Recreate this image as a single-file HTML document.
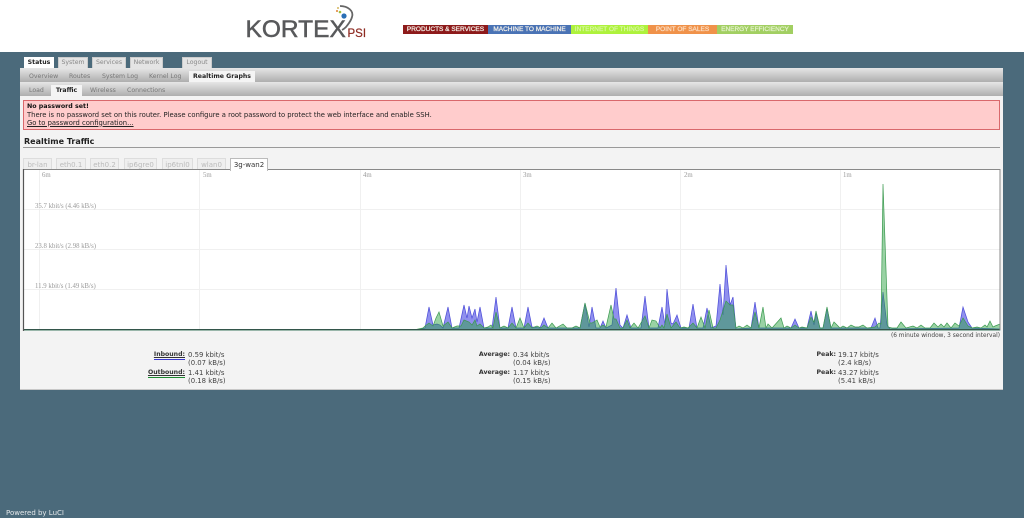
<!DOCTYPE html>
<html><head><meta charset="utf-8"><style>
*{box-sizing:border-box}
html,body{margin:0;padding:0;background:#4b6a7b}
body{width:1024px;height:518px;position:relative;overflow:hidden;font-family:"DejaVu Sans",sans-serif;font-size:6.8px;color:#333}
#w{position:absolute;left:0;top:0;width:1024px;height:518px;background:#4b6a7b;filter:blur(.3px)}
.a{position:absolute;white-space:nowrap}
.tab{position:absolute;top:57px;height:11px;background:#e4e4e4;border:1px solid #ccc;border-bottom:0;text-align:center;line-height:10px;color:#888;font-size:6.2px;white-space:nowrap}
.tab.on{background:#fff;color:#222;font-weight:bold;border-color:#fff}
.bar{position:absolute;left:20px;width:983px;background:linear-gradient(#e6e6e6,#aeaeae)}
.t2{position:absolute;color:#777;font-size:6.2px;white-space:nowrap;line-height:9px}
.sub{position:absolute;height:11px;background:#f4f4f4;color:#222;font-weight:bold;font-size:6.2px;line-height:11px;text-align:center;white-space:nowrap}
.ct{position:absolute;top:158px;height:12px;background:#efefef;border:1px solid #ddd;border-bottom:0;color:#bbb;font-size:7px;line-height:12px;text-align:center;white-space:nowrap}
.r{position:absolute;text-align:right;white-space:nowrap;font-weight:bold;color:#333;font-size:6.2px}
.v{position:absolute;white-space:nowrap;color:#444;font-size:6.9px;line-height:8px}
.seg{position:absolute;top:25px;height:9px;color:#f4f0e8;font:6.5px/9.5px "Liberation Sans",sans-serif;text-align:center;white-space:nowrap;overflow:hidden;-webkit-text-stroke:.25px currentColor}
</style></head><body><div id="w">
<div class="a" style="left:0;top:0;width:1024px;height:52px;background:#fff"></div>
<div class="a" style="left:245.5px;top:15.5px;font:24.5px/28px 'Liberation Sans',sans-serif;color:#58595b;-webkit-text-stroke:.5px #58595b">KORTEX</div>
<div class="a" style="left:347.5px;top:28px;font:11.5px/13px 'Liberation Sans',sans-serif;color:#8e2b22;-webkit-text-stroke:.2px #8e2b22">PSI</div>
<svg class="a" style="left:330px;top:0" width="30" height="34" viewBox="0 0 30 34">
<path d="M10 6C18 6 24 11 22 17C21 21 19 23 16 27C15 28 14 29 12 30" fill="none" stroke="#666" stroke-width="1.8"/>
<circle cx="14" cy="16" r="2.6" fill="#2a6fb5"/><circle cx="10" cy="12" r="1.3" fill="#a0c040"/><circle cx="7" cy="11" r="1" fill="#e08030"/><circle cx="8" cy="8" r=".9" fill="#c8a030"/>
</svg>
<div class="seg" style="left:403px;width:85px;background:#8d1a1a">PRODUCTS &amp; SERVICES</div>
<div class="seg" style="left:488px;width:83px;background:#4a73b5">MACHINE TO MACHINE</div>
<div class="seg" style="left:571px;width:77px;background:#aef23c;color:#d8f8a0">INTERNET OF THINGS</div>
<div class="seg" style="left:648px;width:69px;background:#f0924a;color:#fbdcc0">POINT OF SALES</div>
<div class="seg" style="left:717px;width:76px;background:#a2cf62;color:#e4f2cc">ENERGY EFFICIENCY</div>

<div class="tab on" style="left:24px;width:30px">Status</div>
<div class="tab" style="left:58px;width:30px">System</div>
<div class="tab" style="left:92px;width:34px">Services</div>
<div class="tab" style="left:130px;width:33px">Network</div>
<div class="tab" style="left:182px;width:30px">Logout</div>

<div class="a" style="left:20px;top:68px;width:983px;height:322px;background:#f3f3f3"></div>
<div class="bar" style="top:68px;height:14px"></div>
<div class="bar" style="top:82px;height:14px"></div>
<div class="t2" style="left:29px;top:72px">Overview</div>
<div class="t2" style="left:69px;top:72px">Routes</div>
<div class="t2" style="left:102px;top:72px">System Log</div>
<div class="t2" style="left:149px;top:72px">Kernel Log</div>
<div class="sub" style="left:189px;top:71px;width:66px">Realtime Graphs</div>
<div class="t2" style="left:29px;top:86px">Load</div>
<div class="sub" style="left:51px;top:85px;width:31px">Traffic</div>
<div class="t2" style="left:90px;top:86px">Wireless</div>
<div class="t2" style="left:127px;top:86px">Connections</div>

<div class="a" style="left:23px;top:100px;width:977px;height:30px;background:#ffcccc;border:1px solid #d9686c"></div>
<div class="a" style="left:27px;top:102px;font-weight:bold;font-size:6.3px;color:#111;line-height:9px">No password set!</div>
<div class="a" style="left:27px;top:110.5px;color:#222;line-height:9px">There is no password set on this router. Please configure a root password to protect the web interface and enable SSH.</div>
<div class="a" style="left:27px;top:118.5px;color:#222;line-height:9px;text-decoration:underline">Go to password configuration...</div>

<div class="a" style="left:24px;top:136px;font-weight:bold;font-size:8px;line-height:12px;color:#222">Realtime Traffic</div>
<div class="a" style="left:23px;top:147px;width:977px;height:1px;background:#999"></div>

<div class="ct" style="left:23px;width:29px">br-lan</div>
<div class="ct" style="left:56px;width:30px">eth0.1</div>
<div class="ct" style="left:90px;width:29px">eth0.2</div>
<div class="ct" style="left:124px;width:33px">ip6gre0</div>
<div class="ct" style="left:162px;width:31px">ip6tnl0</div>
<div class="ct" style="left:197px;width:29px">wlan0</div>
<div class="ct" style="left:230px;width:38px;background:#fff;color:#333;border-color:#bbb;height:13px;z-index:2">3g-wan2</div>

<svg class="a" style="left:0;top:0" width="1024" height="340" viewBox="0 0 1024 340">
<rect x="24" y="169.5" width="976" height="160.5" fill="#fff"/>
<g stroke="#f0f0f0" stroke-width="1" fill="none">
<path d="M39.5 170V330M199.5 170V330M360.5 170V330M520.5 170V330M680.5 170V330M840.5 170V330M24 209.5H1000M24 249.5H1000M24 289.5H1000"/>
</g>
<g font-family="'Liberation Serif',serif" font-size="6.8" fill="#999">
<text x="42" y="177">6m</text><text x="203" y="177">5m</text><text x="363" y="177">4m</text><text x="523" y="177">3m</text><text x="684" y="177">2m</text><text x="843" y="177">1m</text>
<text x="35" y="208">35.7 kbit/s (4.46 kB/s)</text>
<text x="35" y="248">23.8 kbit/s (2.98 kB/s)</text>
<text x="35" y="288">11.9 kbit/s (1.49 kB/s)</text>
</g>
<path d="M24 329.5L420 329.5 425 328 429 307 433 325 437 324 440 325 443 328 448 307 452 328 459 328 464 305 467 318 469 306 472 318 475 309 477 322 480 307 484 328 492 328 496 297 500 328 508 328 512 307 516 328 524 328 528 307 532 327 540 328 544 318 548 328 580 328 585 303 589 327 592 307 596 328 600 328 603 321 606 328 612 325 616 288 620 325 623 328 627 315 631 328 641 328 645 296 649 328 658 328 662 307 665 325 667 289 671 323 673 324 677 315 681 328 689 328 693 304 697 328 703 328 707 308 711 328 716 326 720 284 723 315 726 265 730 305 733 297 736 329 751 328 755 302 759 328 791 328 795 319 799 328 807 328 811 311 814 325 816 313 820 328 823 328 827 308 831 328 871 328 875 318 878 328 880 328 883 292 887 325 890 329 959 328 963 307 968 322 972 328 1000 329V330H24Z" fill="#3434e0" fill-opacity=".55" stroke="#4a4ad8" stroke-width=".7"/>
<path d="M24 329.5L416 329.5 423 328 425 326 429 323 433 326 436 318 439 312 443 326 448 322 452 328 457 326 461 326 464 320 469 322 472 325 475 320 477 326 480 324 484 328 488 327 491 325 493 328 496 312 500 328 504 326 508 328 512 323 516 328 520 318 524 328 528 323 532 328 537 326 541 328 544 325 548 328 552 323 556 328 563 324 567 328 572 328 576 326 580 328 585 303 590 323 592 323 597 320 600 327 603 325 606 327 611 305 614 319 616 319 620 328 623 328 627 320 630 328 634 323 638 328 645 316 649 328 652 320 656 321 660 328 662 325 664 328 667 314 671 328 676 322 680 328 684 327 688 328 693 323 697 328 701 317 705 328 709 310 713 328 716 328 720 320 726 301 730 305 733 305 736 328 739 326 743 328 747 325 751 328 755 312 759 328 763 307 766 328 768 324 772 328 781 318 784 328 787 326 791 328 795 325 799 328 802 327 807 328 811 317 814 322 816 311 820 328 823 328 827 307 831 328 834 322 840 328 843 326 847 328 851 325 855 327 859 327 863 325 867 328 875 327 879 323 881 324 883 184 888 327 892 328 897 328 901 322 906 328 913 326 917 328 921 325 925 328 930 328 934 323 938 327 941 324 944 327 947 323 951 328 955 323 959 326 963 318 968 326 972 328 977 327 981 328 985 325 987 327 990 321 993 327 995 326 1000 324V330H24Z" fill="#2aa040" fill-opacity=".48" stroke="#3c9a50" stroke-width=".7"/>
<rect x="24" y="329" width="976" height="1.2" fill="#33554a"/>
<path d="M24 169.5H1000V330" fill="none" stroke="#888" stroke-width="1"/>
<path d="M23.5 169V331" fill="none" stroke="#555" stroke-width="1.2"/>
</svg>

<div class="a" style="right:24px;top:332px;font-size:5.85px;line-height:8px;color:#444">(6 minute window, 3 second interval)</div>

<div class="r" style="right:839px;top:350.5px;border-bottom:1px solid #3a3ad0;line-height:8px"><u>Inbound:</u></div>
<div class="v" style="left:188px;top:350.5px">0.59 kbit/s<br>(0.07 kB/s)</div>
<div class="r" style="right:839px;top:368.5px;border-bottom:1px solid #1d8a30;line-height:8px"><u>Outbound:</u></div>
<div class="v" style="left:188px;top:368.5px">1.41 kbit/s<br>(0.18 kB/s)</div>
<div class="r" style="right:514px;top:350.5px;line-height:8px">Average:</div>
<div class="v" style="left:513px;top:350.5px">0.34 kbit/s<br>(0.04 kB/s)</div>
<div class="r" style="right:514px;top:368.5px;line-height:8px">Average:</div>
<div class="v" style="left:513px;top:368.5px">1.17 kbit/s<br>(0.15 kB/s)</div>
<div class="r" style="right:188px;top:350.5px;line-height:8px">Peak:</div>
<div class="v" style="left:838px;top:350.5px">19.17 kbit/s<br>(2.4 kB/s)</div>
<div class="r" style="right:188px;top:368.5px;line-height:8px">Peak:</div>
<div class="v" style="left:838px;top:368.5px">43.27 kbit/s<br>(5.41 kB/s)</div>

<div class="a" style="left:20px;top:389px;width:983px;height:1px;background:#c8c8c8"></div>
<div class="a" style="left:6px;top:509px;color:#e4e8ea;font-size:7px;line-height:9px">Powered by LuCI</div>
</div></body></html>
